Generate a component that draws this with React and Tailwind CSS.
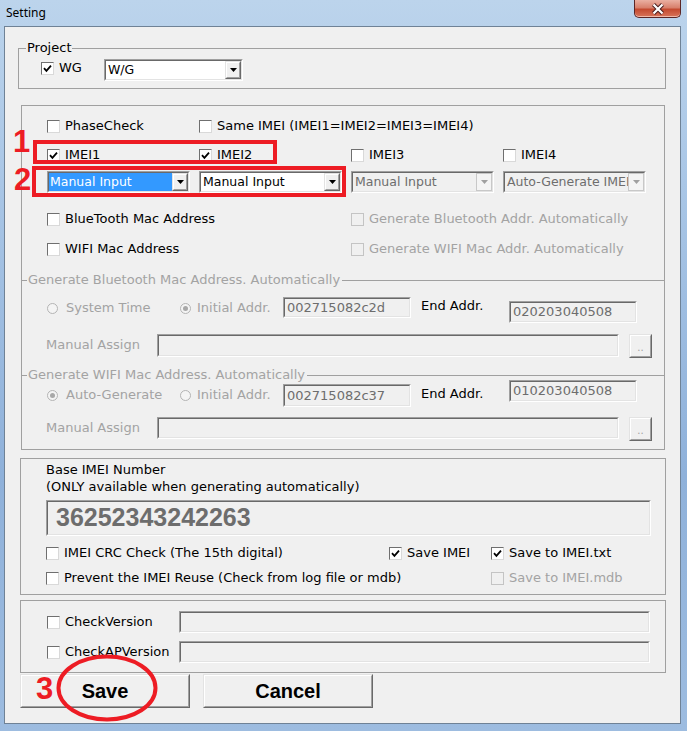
import React from 'react';

// classic "sunken" edit frame, two nested borders
function Sunken({ className = '', innerClassName = '', children }) {
  return (
    <div className={`border border-t-[#a0a0a0] border-l-[#a0a0a0] border-r-white border-b-white ${className}`}>
      <div className={`h-full w-full border border-t-[#696969] border-l-[#696969] border-r-[#e3e3e3] border-b-[#e3e3e3] ${innerClassName}`}>
        {children}
      </div>
    </div>
  );
}

function Raised({ className = '', innerClassName = '', children }) {
  return (
    <div className={`border border-t-[#e3e3e3] border-l-[#e3e3e3] border-r-[#696969] border-b-[#696969] bg-[#f0f0f0] ${className}`}>
      <div className={`h-full w-full border border-t-white border-l-white border-r-[#a0a0a0] border-b-[#a0a0a0] ${innerClassName}`}>
        {children}
      </div>
    </div>
  );
}

function Check({ on = false, off = false }) {
  return (
    <span
      className={
        off
          ? 'flex h-[13px] w-[13px] shrink-0 items-center justify-center border border-[#c4c4c4] bg-[#f0f0f0]'
          : 'flex h-[13px] w-[13px] shrink-0 items-center justify-center border border-t-[#6f6f6f] border-l-[#6f6f6f] border-r-[#d9d9d9] border-b-[#d9d9d9] bg-white'
      }
    >
      {on && (
        <svg width="9" height="9" viewBox="0 0 9 9">
          <path d="M1 4.2L3.4 6.8L8 1.6" fill="none" stroke="#000" strokeWidth="1.8" />
        </svg>
      )}
    </span>
  );
}

function CheckLabel({ on, off, children, className = '' }) {
  return (
    <div className={`flex items-center gap-[5px] whitespace-nowrap ${className}`}>
      <Check on={on} off={off} />
      <span className={off ? 'text-[#a3a3a3]' : ''}>{children}</span>
    </div>
  );
}

function Radio({ on = false, children, className = '' }) {
  return (
    <div className={`flex h-[16px] items-center whitespace-nowrap text-[#a3a3a3] ${className}`}>
      <span className="flex h-[11px] w-[11px] shrink-0 items-center justify-center rounded-full border border-[#b4b4b4] bg-[#f4f4f4]">
        {on && <span className="h-[5px] w-[5px] rounded-full bg-[#a8a8a8]" />}
      </span>
      {children}
    </div>
  );
}

function Combo({ value, selected = false, off = false, className = '' }) {
  return (
    <Sunken className={className} innerClassName={off ? 'flex bg-[#f0f0f0]' : 'flex bg-white'}>
      <div
        className={
          selected
            ? 'flex min-w-0 flex-1 items-center overflow-hidden whitespace-nowrap bg-[#3399ff] pl-[1px] text-[12.5px] text-white'
            : off
            ? 'flex min-w-0 flex-1 items-center overflow-hidden whitespace-nowrap pl-[2px] text-[12.5px] text-[#6d6d6d]'
            : 'flex min-w-0 flex-1 items-center overflow-hidden whitespace-nowrap pl-[2px] text-[12.5px] text-black'
        }
      >
        {value}
      </div>
      {off ? (
        <div className="flex w-[16px] shrink-0 items-center justify-center border border-[#c8c8c8] bg-[#f4f4f4]">
          <svg width="7" height="4" viewBox="0 0 7 4">
            <path d="M0 0H7L3.5 4Z" fill="#a0a0a0" />
          </svg>
        </div>
      ) : (
        <Raised className="w-[16px] shrink-0" innerClassName="flex items-center justify-center">
          <svg width="7" height="4" viewBox="0 0 7 4">
            <path d="M0 0H7L3.5 4Z" fill="#000" />
          </svg>
        </Raised>
      )}
    </Sunken>
  );
}

function Edit({ value = '', className = '' }) {
  return (
    <Sunken className={className} innerClassName="flex items-center bg-[#f0f0f0] pl-[2px] text-[#6d6d6d]">
      {value}
    </Sunken>
  );
}

function Dots() {
  return (
    <Raised className="h-[24px] w-[23px] shrink-0" innerClassName="flex items-end justify-center pb-[3px] text-[10px] leading-none text-[#a0a0a0]">
      ..
    </Raised>
  );
}

function Separator({ label, className = '' }) {
  return (
    <div className={`flex h-[16px] items-center ${className}`}>
      <span className="h-px w-[5px] bg-[#a0a0a0]" />
      <span className="pl-[1px] pr-[2px] leading-[16px] text-[#a3a3a3]">{label}</span>
      <span className="h-px flex-1 bg-[#a0a0a0]" />
    </div>
  );
}

function GroupTitle({ children }) {
  return (
    <div className="-mt-[9px] ml-[7px] w-fit bg-[#f0f0f0] px-[1px] leading-[16px]">{children}</div>
  );
}

export default function App() {
  return (
    <div className="relative h-[731px] w-[687px] overflow-hidden bg-[linear-gradient(180deg,#bcd4ec_0%,#a9c6e6_25%,#8fb1da_65%,#9dbce0_100%)] font-['DejaVu_Sans',sans-serif] text-[13px] text-black">
      {/* title bar */}
      <div className="flex h-[26px] items-start">
        <span className="ml-[6px] mt-[5px] font-['Noto_Sans',sans-serif] text-[12px] leading-[16px]">Setting</span>
        <div className="ml-auto mr-[6px] flex h-[18px] w-[47px] items-center justify-center rounded-b-[5px] border border-t-0 border-[#5b2626] bg-[linear-gradient(180deg,#eab0a2_0%,#d8806c_45%,#c44a30_55%,#d8745a_100%)] shadow-[inset_0_-1px_0_#f0b8a8]">
          <svg width="14" height="12" viewBox="0 0 14 12">
            <path d="M2.5 1.5L11.5 10.5M11.5 1.5L2.5 10.5" stroke="#4a1f1f" strokeWidth="4.2" />
            <path d="M2.5 1.5L11.5 10.5M11.5 1.5L2.5 10.5" stroke="#ffffff" strokeWidth="2.2" />
          </svg>
        </div>
      </div>

      {/* client area */}
      <div className="ml-[4px] mr-[6px] flex h-[698px] flex-col border border-[#6f8296] bg-[#f0f0f0]">
        {/* Project */}
        <div className="ml-[13px] mt-[21px] flex h-[41px] w-[648px] shrink-0 flex-col border border-[#a0a0a0]">
          <GroupTitle>Project</GroupTitle>
          <div className="mt-[3px] flex h-[22px] pl-[22px]">
            <div className="flex w-[63px] items-start gap-[5px] pt-[3px]">
              <Check on />
              <span className="-mt-[2px] leading-[16px]">WG</span>
            </div>
            <Combo value="W/G" className="h-[22px] w-[139px]" />
          </div>
        </div>

        {/* main options */}
        <div className="ml-[16px] mt-[16px] flex h-[345px] w-[644px] shrink-0 flex-col border border-[#a0a0a0]">
          <div className="mt-[10px] flex h-[20px] pl-[25px]">
            <CheckLabel className="w-[152px]">PhaseCheck</CheckLabel>
            <CheckLabel>Same IMEI (IMEI1=IMEI2=IMEI3=IMEI4)</CheckLabel>
          </div>
          <div className="mt-[9px] flex h-[20px] pl-[25px]">
            <CheckLabel on className="w-[152px]">IMEI1</CheckLabel>
            <CheckLabel on className="w-[152px]">IMEI2</CheckLabel>
            <CheckLabel className="w-[152px]">IMEI3</CheckLabel>
            <CheckLabel className="w-[152px]">IMEI4</CheckLabel>
          </div>
          <div className="mt-[6px] flex h-[22px] gap-[9px] pl-[25px]">
            <Combo value="Manual Input" selected className="w-[143px]" />
            <Combo value="Manual Input" className="w-[143px]" />
            <Combo value="Manual Input" off className="w-[143px]" />
            <Combo value="Auto-Generate IMEI" off className="w-[143px]" />
          </div>
          <div className="mt-[16px] flex h-[20px] pl-[25px]">
            <CheckLabel className="w-[304px]">BlueTooth Mac Address</CheckLabel>
            <CheckLabel off>Generate Bluetooth Addr. Automatically</CheckLabel>
          </div>
          <div className="mt-[10px] flex h-[20px] pl-[25px]">
            <CheckLabel className="w-[304px]">WIFI Mac Address</CheckLabel>
            <CheckLabel off>Generate WIFI Mac Addr. Automatically</CheckLabel>
          </div>

          <Separator label="Generate Bluetooth Mac Address. Automatically" className="mt-[13px]" />
          <div className="mt-[8px] flex h-[27px] items-start pl-[25px]">
            <Radio className="mt-[4px] w-[133px] gap-[8px]">System Time</Radio>
            <Radio on className="mt-[4px] w-[103px] gap-[6px]">Initial Addr.</Radio>
            <Edit value="002715082c2d" className="mt-[1px] h-[21px] w-[128px]" />
            <span className="mt-[2px] w-[98px] pl-[10px] leading-[16px]">End Addr.</span>
            <Edit value="020203040508" className="mt-[5px] h-[22px] w-[128px]" />
          </div>
          <div className="mt-[11px] flex h-[24px] items-start pl-[24px]">
            <span className="mt-[3px] w-[111px] leading-[16px] text-[#a3a3a3]">Manual Assign</span>
            <Edit className="h-[23px] w-[462px]" />
            <div className="ml-[10px]">
              <Dots />
            </div>
          </div>

          <Separator label="Generate WIFI Mac Address. Automatically" className="mt-[9px]" />
          <div className="-mt-[3px] flex h-[27px] items-start pl-[25px]">
            <Radio on className="mt-[7px] w-[133px] gap-[8px]">Auto-Generate</Radio>
            <Radio className="mt-[7px] w-[103px] gap-[6px]">Initial Addr.</Radio>
            <Edit value="002715082c37" className="mt-[4px] h-[23px] w-[128px]" />
            <span className="mt-[6px] w-[98px] pl-[10px] leading-[16px]">End Addr.</span>
            <Edit value="010203040508" className="h-[22px] w-[128px]" />
          </div>
          <div className="mt-[10px] flex h-[24px] items-start pl-[24px]">
            <span className="mt-[3px] w-[111px] leading-[16px] text-[#a3a3a3]">Manual Assign</span>
            <Edit className="h-[22px] w-[462px]" />
            <div className="ml-[10px]">
              <Dots />
            </div>
          </div>
        </div>

        {/* base IMEI */}
        <div className="ml-[15px] mt-[8px] flex h-[137px] w-[646px] shrink-0 flex-col border border-[#a0a0a0] pl-[25px]">
          <div className="mt-[3px] h-[16px] leading-[16px]">Base IMEI Number</div>
          <div className="mt-[1px] h-[16px] leading-[16px]">(ONLY available when generating automatically)</div>
          <Sunken className="mt-[5px] h-[36px] w-[605px]" innerClassName="flex items-center bg-[#f0f0f0] pl-[8px] font-['Liberation_Sans',Arial,sans-serif] text-[25px] font-bold text-[#6d6d6d]">
            36252343242263
          </Sunken>
          <div className="mt-[9px] flex h-[16px]">
            <CheckLabel className="w-[343px]">IMEI CRC Check (The 15th digital)</CheckLabel>
            <CheckLabel on className="w-[102px]">Save IMEI</CheckLabel>
            <CheckLabel on>Save to IMEI.txt</CheckLabel>
          </div>
          <div className="mt-[9px] flex h-[16px]">
            <CheckLabel className="w-[445px]">Prevent the IMEI Reuse (Check from log file or mdb)</CheckLabel>
            <CheckLabel off>Save to IMEI.mdb</CheckLabel>
          </div>
        </div>

        {/* versions */}
        <div className="ml-[15px] mt-[5px] flex h-[73px] w-[646px] shrink-0 flex-col border border-[#a0a0a0] pl-[26px]">
          <div className="mt-[10px] flex h-[22px] items-center">
            <CheckLabel className="w-[132px]">CheckVersion</CheckLabel>
            <Edit className="h-[22px] w-[471px]" />
          </div>
          <div className="mt-[8px] flex h-[22px] items-center">
            <CheckLabel className="w-[132px]">CheckAPVersion</CheckLabel>
            <Edit className="h-[22px] w-[471px]" />
          </div>
        </div>

        {/* buttons */}
        <div className="ml-[15px] mt-[1px] flex gap-[13px] font-['Liberation_Sans',Arial,sans-serif] text-[20px] font-bold">
          <Raised className="h-[34px] w-[170px]" innerClassName="flex items-center justify-center">
            Save
          </Raised>
          <Raised className="h-[34px] w-[170px]" innerClassName="flex items-center justify-center">
            Cancel
          </Raised>
        </div>
      </div>

      {/* red annotations drawn over the dialog */}
      <div className="pointer-events-none absolute inset-0 font-['Liberation_Sans',Arial,sans-serif] text-[31px] font-bold leading-none text-[#ed1c24]">
        <span className="absolute left-[13px] top-[126px]">1</span>
        <span className="absolute left-[14px] top-[164px]">2</span>
        <span className="absolute left-[36px] top-[673px]">3</span>
        <div className="absolute left-[33px] top-[140px] h-[24px] w-[244px] border-4 border-[#ed1c24]" />
        <div className="absolute left-[32px] top-[166px] h-[31px] w-[314px] border-4 border-[#ed1c24]" />
        <svg className="absolute left-[55px] top-[653px]" width="104" height="70" viewBox="0 0 104 70">
          <ellipse cx="52" cy="35" rx="48.5" ry="31.5" fill="none" stroke="#ed1c24" strokeWidth="4" />
        </svg>
      </div>
    </div>
  );
}
